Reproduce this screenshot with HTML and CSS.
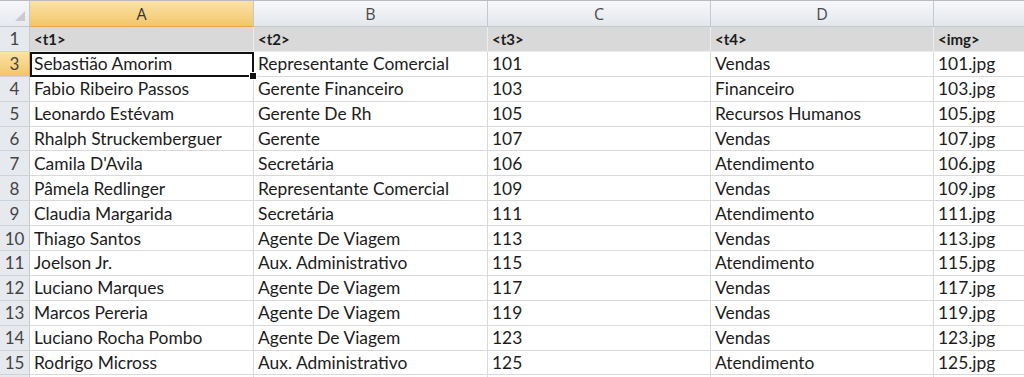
FILE: index.html
```html
<!DOCTYPE html>
<html lang="en">

<head>
    <meta charset="UTF-8">
    <title>Planilha</title>
    <link rel="stylesheet" href="styles.css">
</head>

<body>
    <div class="sheet">
        <!-- column headers (E is scrolled past the right edge) -->
        <div class="corner"><span class="tri"></span></div>
        <div class="colhead active">A</div>
        <div class="colhead">B</div>
        <div class="colhead">C</div>
        <div class="colhead">D</div>
        <div class="colhead"></div>

        <!-- row 1 -->
        <div class="rowhead">1</div>
        <div class="cell tag">&lt;t1&gt;</div>
        <div class="cell tag">&lt;t2&gt;</div>
        <div class="cell tag">&lt;t3&gt;</div>
        <div class="cell tag">&lt;t4&gt;</div>
        <div class="cell tag">&lt;img&gt;</div>

        <div class="rowhead active">3</div>
        <div class="cell selected">Sebastião Amorim<span class="handle"></span></div>
        <div class="cell">Representante Comercial</div>
        <div class="cell">101</div>
        <div class="cell">Vendas</div>
        <div class="cell">101.jpg</div>

        <div class="rowhead">4</div>
        <div class="cell">Fabio Ribeiro Passos</div>
        <div class="cell">Gerente Financeiro</div>
        <div class="cell">103</div>
        <div class="cell">Financeiro</div>
        <div class="cell">103.jpg</div>

        <div class="rowhead">5</div>
        <div class="cell">Leonardo Estévam</div>
        <div class="cell">Gerente De Rh</div>
        <div class="cell">105</div>
        <div class="cell">Recursos Humanos</div>
        <div class="cell">105.jpg</div>

        <div class="rowhead">6</div>
        <div class="cell">Rhalph Struckemberguer</div>
        <div class="cell">Gerente</div>
        <div class="cell">107</div>
        <div class="cell">Vendas</div>
        <div class="cell">107.jpg</div>

        <div class="rowhead">7</div>
        <div class="cell">Camila D'Avila</div>
        <div class="cell">Secretária</div>
        <div class="cell">106</div>
        <div class="cell">Atendimento</div>
        <div class="cell">106.jpg</div>

        <div class="rowhead">8</div>
        <div class="cell">Pâmela Redlinger</div>
        <div class="cell">Representante Comercial</div>
        <div class="cell">109</div>
        <div class="cell">Vendas</div>
        <div class="cell">109.jpg</div>

        <div class="rowhead">9</div>
        <div class="cell">Claudia Margarida</div>
        <div class="cell">Secretária</div>
        <div class="cell">111</div>
        <div class="cell">Atendimento</div>
        <div class="cell">111.jpg</div>

        <div class="rowhead">10</div>
        <div class="cell">Thiago Santos</div>
        <div class="cell">Agente De Viagem</div>
        <div class="cell">113</div>
        <div class="cell">Vendas</div>
        <div class="cell">113.jpg</div>

        <div class="rowhead">11</div>
        <div class="cell">Joelson Jr.</div>
        <div class="cell">Aux. Administrativo</div>
        <div class="cell">115</div>
        <div class="cell">Atendimento</div>
        <div class="cell">115.jpg</div>

        <div class="rowhead">12</div>
        <div class="cell">Luciano Marques</div>
        <div class="cell">Agente De Viagem</div>
        <div class="cell">117</div>
        <div class="cell">Vendas</div>
        <div class="cell">117.jpg</div>

        <div class="rowhead">13</div>
        <div class="cell">Marcos Pereria</div>
        <div class="cell">Agente De Viagem</div>
        <div class="cell">119</div>
        <div class="cell">Vendas</div>
        <div class="cell">119.jpg</div>

        <div class="rowhead">14</div>
        <div class="cell">Luciano Rocha Pombo</div>
        <div class="cell">Agente De Viagem</div>
        <div class="cell">123</div>
        <div class="cell">Vendas</div>
        <div class="cell">123.jpg</div>

        <div class="rowhead">15</div>
        <div class="cell">Rodrigo Micross</div>
        <div class="cell">Aux. Administrativo</div>
        <div class="cell">125</div>
        <div class="cell">Atendimento</div>
        <div class="cell">125.jpg</div>

        <!-- next row, only its top edge shows -->
        <div class="rowhead"></div>
        <div class="cell"></div>
        <div class="cell"></div>
        <div class="cell"></div>
        <div class="cell"></div>
        <div class="cell"></div>
    </div>
</body>

</html>
```

FILE: styles.css
```css
body {
    margin: 0;
    background: #ffffff;
    overflow: hidden;
}

.sheet {
    display: grid;
    grid-template-columns: 30px 224px 234px 223px 223px 224px;
    grid-template-rows: 26px repeat(15, 24.9px);
    font-family: Lato, "Open Sans", sans-serif;
    font-size: 17.4px;
    color: #1c1c1c;
    border-top: 1px solid #b8bcc2;
}

.corner {
    position: relative;
    background: linear-gradient(#f6f7f9, #e6e9ee);
    border-right: 1px solid #c5c9cf;
    border-bottom: 1px solid #c5c9cf;
}

.tri {
    position: absolute;
    right: 4px;
    bottom: 5px;
    width: 0;
    height: 0;
    border-left: 10px solid transparent;
    border-bottom: 10px solid #c8ccd2;
}

.colhead {
    display: flex;
    align-items: center;
    justify-content: center;
    background: linear-gradient(#f7f8fa, #e3e7ec);
    border-right: 1px solid #c5c9cf;
    border-bottom: 1px solid #c5c9cf;
    color: #4a4a4a;
    font-family: "Open Sans", sans-serif;
    font-size: 16px;
}

.colhead.active {
    background: linear-gradient(#fbe2a6, #f2c66a);
    border-bottom-color: #e0a94a;
    color: #333;
}

.rowhead {
    display: flex;
    align-items: center;
    justify-content: center;
    background: #e6e9ee;
    border-right: 1px solid #c5c9cf;
    border-bottom: 1px solid #cfd3d8;
    color: #444;
    font-size: 17px;
}

.rowhead.active {
    background: linear-gradient(#fbe2a6, #f2c66a);
    border-right-color: #e0a94a;
}

.cell {
    display: flex;
    align-items: center;
    padding-left: 4px;
    border-right: 1px solid #d9d9d9;
    border-bottom: 1px solid #d9d9d9;
    white-space: nowrap;
    overflow: hidden;
    min-width: 0;
}

.cell.tag {
    background: #d9d9d9;
    border-right-color: #ececec;
    border-bottom-color: #ececec;
    font-weight: bold;
    font-size: 15px;
}

.cell.selected {
    position: relative;
    overflow: visible;
    outline: 2px solid #111;
    outline-offset: -2px;
    z-index: 1;
}

.handle {
    position: absolute;
    right: -4px;
    bottom: -4px;
    width: 6px;
    height: 6px;
    background: #111;
    border: 1px solid #fff;
}
```
